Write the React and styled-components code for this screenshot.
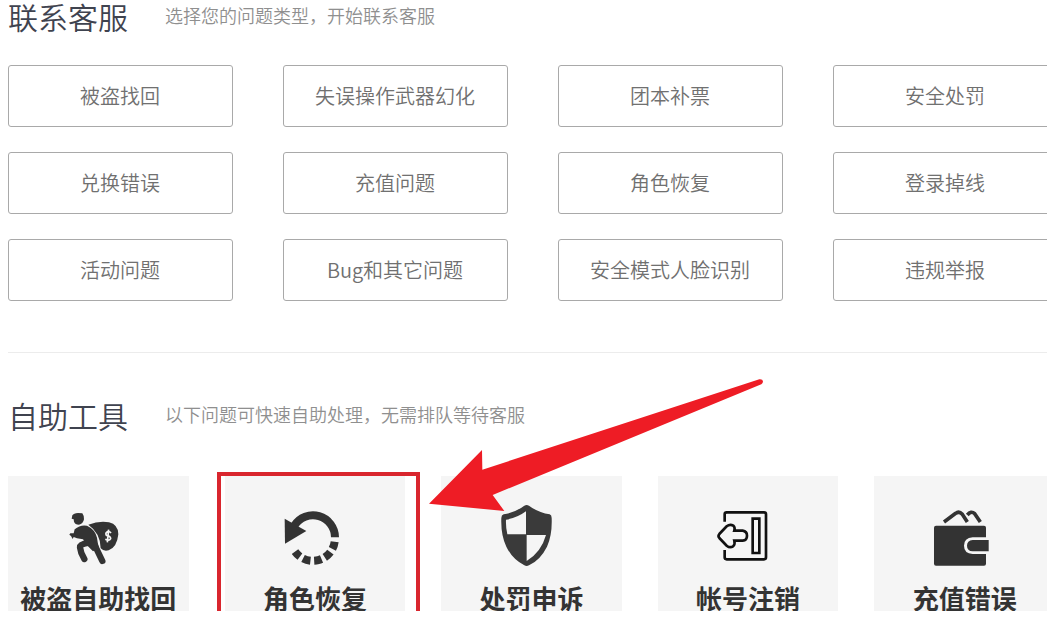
import React from "react";
import styled, { createGlobalStyle } from "styled-components";

const GlobalStyle = createGlobalStyle`
  * { box-sizing: border-box; }
  body {
    margin: 0;
    background: #fff;
    overflow-x: hidden;
    font-family: "Noto Sans CJK SC", "Noto Sans", sans-serif;
  }
`;

const Page = styled.main`
  padding-left: 8px;
  overflow: hidden;
`;

const Section = styled.section`
  padding-top: ${(p) => (p.$divided ? 46 : 0)}px;
  margin-top: ${(p) => (p.$divided ? 51 : 0)}px;
  border-top: ${(p) => (p.$divided ? "1px solid #ececec" : "none")};
`;

const SectionHeader = styled.header`
  display: flex;
  align-items: flex-start;
  gap: 37px;
  min-height: 36px;
`;

const Title = styled.h2`
  margin: 0;
  font-size: 30px;
  line-height: 32px;
  font-weight: 350;
  color: #3f434f;
  white-space: nowrap;
`;

const Hint = styled.p`
  margin: 0;
  font-size: 18px;
  line-height: 30px;
  font-weight: 350;
  color: #8f8f8f;
  white-space: nowrap;
`;

const IssueGrid = styled.div`
  display: grid;
  grid-template-columns: repeat(4, 1fr);
  gap: 25px 50px;
  margin: 29px -11px 0 0;
`;

const IssueButton = styled.button`
  height: 62px;
  padding: 0 1px 1px 0;
  border: 1px solid #a9a9a9;
  border-radius: 3px;
  background: #fff;
  color: #707070;
  font-family: inherit;
  font-size: 20px;
  font-weight: 350;
  line-height: 30px;
  cursor: pointer;
`;

const ToolGrid = styled.div`
  display: grid;
  grid-template-columns: repeat(5, 1fr);
  gap: 36px;
  margin: 41px -8px 0 0;
`;

const ToolCard = styled.a`
  position: relative;
  z-index: ${(p) => (p.$highlighted ? 1 : 0)};
  display: flex;
  flex-direction: column;
  align-items: center;
  gap: 18px;
  padding-top: 30px;
  background: #f5f5f5;
  color: #333;
  text-decoration: none;
`;

const ToolIcon = styled.svg`
  width: 60px;
  height: 60px;
  overflow: visible;
`;

const ToolLabel = styled.span`
  height: 27px;
  overflow: hidden;
  font-size: 26px;
  line-height: 28px;
  font-weight: 700;
  white-space: nowrap;
`;

const HighlightFrame = styled.span`
  position: absolute;
  top: -4px;
  left: -8px;
  right: -15px;
  bottom: 0;
  border: 4px solid #d9262e;
  border-bottom: none;
`;

const Pointer = styled.svg`
  position: absolute;
  top: -111px;
  left: 195px;
  width: 360px;
  height: 160px;
  pointer-events: none;
`;

const ThiefIcon = () => (
  <ToolIcon viewBox="205 108 180 180" fill="#333" aria-hidden="true">
    <path d="M218 136Q222 130 235 129L248 130Q253 136 253 148Q250 163 238 164Q226 164 223 155L222 148L216 146Z" />
    <path d="M266 164Q298 152 328 157Q356 164 356 193Q352 232 327 241Q312 245 303 235Q303 190 266 164Z" />
    <path d="M225 178Q242 163 262 167Q286 178 292 203Q294 220 298 234L280 244L262 226L250 208L232 205L222 201L219 207L214 198L209 194L212 190L222 190Z" />
    <path d="M268 218Q240 222 241 232Q243 250 254 267M285 225L308 273" fill="none" stroke="#333" strokeWidth="19" strokeLinecap="round" strokeLinejoin="round" />
    <path d="M334 189Q330 183 323 185Q316 189 320 196Q333 198 333 206Q329 214 317 208M327 179L323 217" fill="none" stroke="#f5f5f5" strokeWidth="5" />
  </ToolIcon>
);

const RestoreIcon = () => (
  <ToolIcon viewBox="225 123 180 180" fill="#333" aria-hidden="true">
    <path d="M224 161L289 198L225 236Z" />
    <path d="M253 182A66 66 0 0 1 375 217" fill="none" stroke="#333" strokeWidth="24" />
    <path d="M374 230A66 66 0 0 1 255 260" fill="none" stroke="#333" strokeWidth="24" strokeDasharray="23 11" />
  </ToolIcon>
);

const ShieldIcon = () => (
  <ToolIcon viewBox="214 108 180 180" aria-hidden="true">
    <path fill="#3a3a3a" d="M284 107Q291 103 298 107Q326 128 360 133Q366 135 366 144Q368 195 352 230Q332 270 298 286Q291 290 284 286Q248 268 230 230Q213 195 215 144Q215 135 222 133Q256 128 284 107Z" />
    <path fill="#f5f5f5" d="M289 124Q262 144 229 149Q228 172 233 193H289ZM291 195H349Q335 246 291 273Z" />
  </ToolIcon>
);

const ExitIcon = () => (
  <ToolIcon viewBox="234 108 180 180" fill="none" stroke="#111" strokeWidth="8" aria-hidden="true">
    <path d="M254 155V133Q254 127 260 127H372Q378 127 378 133V262Q378 268 372 268H260Q254 268 254 262V240" />
    <path d="M338 146H358V249H338Z" />
    <path d="M238 192L260 169Q270 161 280 167Q286 173 283 182H308Q321 184 321 197Q321 211 308 212H283Q286 223 279 229Q270 235 260 227L238 204Q233 198 238 192Z" />
  </ToolIcon>
);

const WalletIcon = () => (
  <ToolIcon viewBox="263 108 180 180" fill="#333" aria-hidden="true">
    <rect x="260" y="167" width="156" height="120" rx="6" />
    <path fill="#f5f5f5" d="M418 202H376Q350 204 350 227Q350 250 376 252H418Z" />
    <path d="M424 210H376Q359 212 359 227Q359 243 376 244H424Z" />
    <path d="M290 156L325 130Q335 122 345 133L360 156M360 135Q371 121 382 131L399 156" fill="none" stroke="#333" strokeWidth="11" />
  </ToolIcon>
);

const issues = [
  "被盗找回", "失误操作武器幻化", "团本补票", "安全处罚",
  "兑换错误", "充值问题", "角色恢复", "登录掉线",
  "活动问题", "Bug和其它问题", "安全模式人脸识别", "违规举报",
];

const tools = [
  { label: "被盗自助找回", Icon: ThiefIcon },
  { label: "角色恢复", Icon: RestoreIcon, highlighted: true },
  { label: "处罚申诉", Icon: ShieldIcon },
  { label: "帐号注销", Icon: ExitIcon },
  { label: "充值错误", Icon: WalletIcon },
];

export default function App() {
  return (
    <>
      <GlobalStyle />
      <Page>
        <Section>
          <SectionHeader>
            <Title>联系客服</Title>
            <Hint>选择您的问题类型，开始联系客服</Hint>
          </SectionHeader>
          <IssueGrid>
            {issues.map((name) => (
              <IssueButton key={name} type="button">{name}</IssueButton>
            ))}
          </IssueGrid>
        </Section>
        <Section $divided>
          <SectionHeader>
            <Title>自助工具</Title>
            <Hint>以下问题可快速自助处理，无需排队等待客服</Hint>
          </SectionHeader>
          <ToolGrid>
            {tools.map(({ label, Icon, highlighted }) => (
              <ToolCard key={label} href="#" $highlighted={highlighted}>
                <Icon />
                <ToolLabel>{label}</ToolLabel>
                {highlighted && (
                  <>
                    <HighlightFrame />
                    <Pointer viewBox="0 0 1080 480" aria-hidden="true">
                      <path fill="#ee1c25" d="M27 416L186 255L187 314L1018 43Q1028 42 1029 49Q1029 55 1024 58L218 390L253 438Z" />
                    </Pointer>
                  </>
                )}
              </ToolCard>
            ))}
          </ToolGrid>
        </Section>
      </Page>
    </>
  );
}
